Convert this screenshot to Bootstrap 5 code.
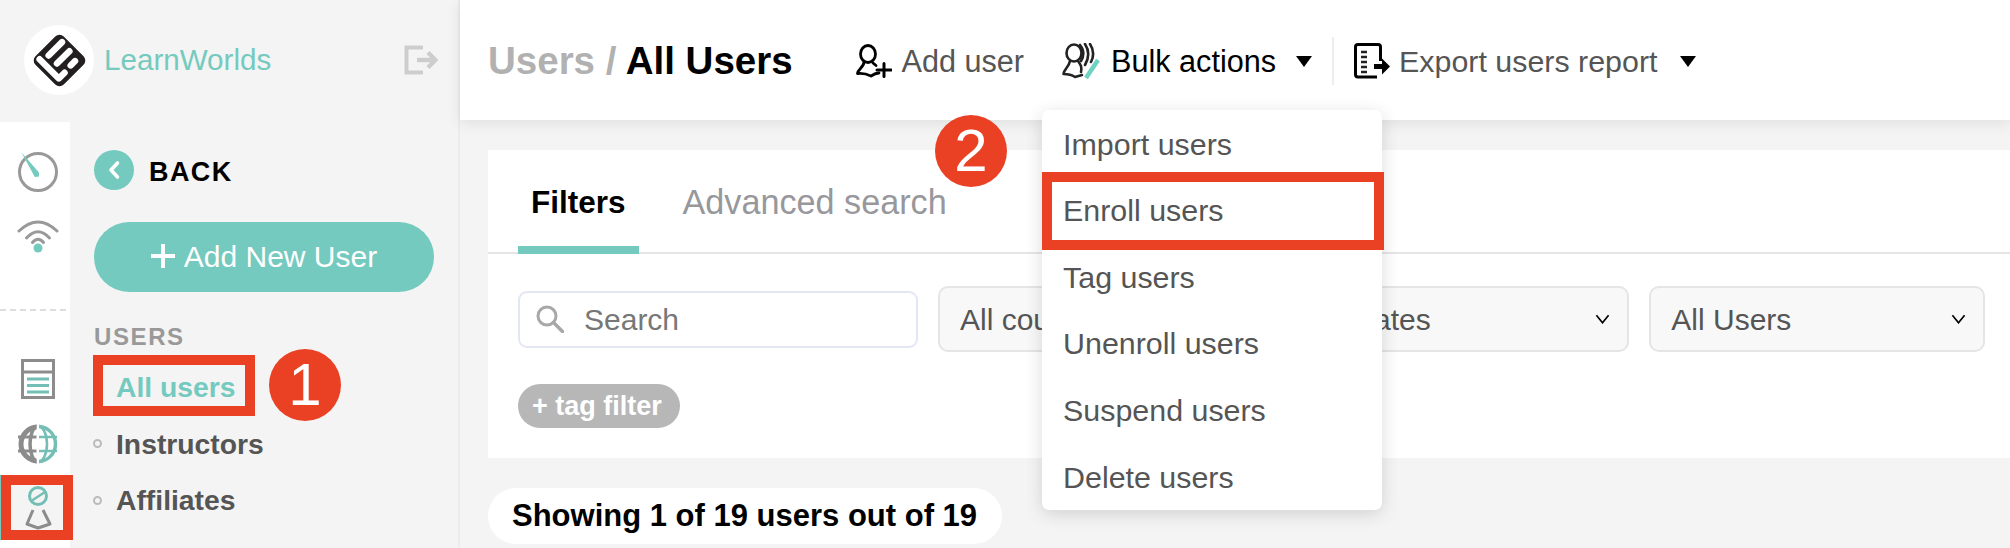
<!DOCTYPE html>
<html lang="en">
<head>
<meta charset="utf-8">
<title>Users / All Users</title>
<link href="https://cdn.jsdelivr.net/npm/bootstrap@5.3.0/dist/css/bootstrap.min.css" rel="stylesheet">
<style>
html,body{height:548px;overflow:hidden}
body{font-family:"Liberation Sans",Arial,sans-serif;background:#f4f4f4;color:#555}
.app-shell{width:2010px;height:548px;overflow:hidden}
.side{flex:0 0 460px;width:460px;min-width:0;border-right:2px solid #ececec;background:#f4f4f4}
.side-head{height:120px;padding-left:24px;flex:none}
.logo-disc{width:70px;height:70px;flex:none}
.logo-name{font-size:29.6px;color:#74cabf;margin-left:10px;line-height:1}
.logout-ico{margin-left:auto;margin-right:20px}
.side-body{margin-top:2px;flex:1;min-height:0}
.rail{flex:0 0 70px;width:70px;background:#fff}
.rail svg{display:block}
.rail-dash{width:66px;border-top:2px dashed #ddd;margin:56px 4px 48px 0}
.rail-active{width:70px;height:65px;margin-top:11px;background:#f4f4f4;box-shadow:inset 1px 0 0 #74cabf}
.panel{flex:1;min-width:0;padding:28px 24px 0;background:#f4f4f4}
.back-disc{width:40px;height:40px;background:#74cabf}
.back-word{font-size:27px;font-weight:700;color:#000;letter-spacing:1.4px;margin:5px 0 0 15px;line-height:1}
.add-pill{width:340px;height:70px;margin-top:32px;padding-bottom:8px;background:#74cabf;border:0;border-radius:35px;color:#fff;font-size:30px;gap:9px}
.add-pill:hover{background:#74cabf;color:#fff}
.group-word{font-size:24px;font-weight:700;color:#999;letter-spacing:1.6px;line-height:30px;margin-top:30px}
.side-menu{margin-top:7px;font-size:28.3px;font-weight:700}
.side-entry{height:56.5px;color:#555;gap:14px}
.side-entry.is-on{color:#74cabf}
.side-dot{width:9px;height:9px;border:2px solid #bbb;border-radius:50%;margin-left:-1px;flex:none}
.ann-box{border:10px solid #ea4125;pointer-events:none;z-index:30}
.box-users{left:-1px;top:-4px;width:162px;height:61px}
.box-rail{left:1px;top:0;width:72px;height:65px}
.box-enroll{left:0;top:-5px;width:342px;height:78px}
.ann-num{width:72px;height:72px;background:#ea4125;color:#fff;font-size:60px;font-weight:400;line-height:1;z-index:30}
.num-one{left:175px;top:-10px}
.num-two{left:475px;top:115px}
.main-col{flex:1;min-width:0;position:relative}
.top-bar{height:120px;background:#fff;box-shadow:0 3px 14px rgba(0,0,0,.09);position:relative;z-index:10;flex:none;padding:2px 0 0 28px}
.page-title{font-size:38.5px;font-weight:700;color:#000;margin:0;line-height:1;white-space:nowrap}
.page-title span{color:#b1b1b1}
.act{font-size:30.6px;color:#555;background:none;border:0;padding:0;display:flex;align-items:center;line-height:1;white-space:nowrap}
.act:hover,.act:focus,.act:active{color:#555}
.act-add{margin-left:63px;gap:10px}
.act-bulk{gap:11px;color:#000}
.act-bulk:hover{color:#000}
.bulk-wrap{margin-left:38px;height:48px;display:flex;align-items:center}
.tri{width:0;height:0;border-left:8px solid transparent;border-right:8px solid transparent;border-top:11px solid #000;margin-left:20px;flex:none}
.top-rule{width:2px;height:48px;background:#eee;margin-left:20px}
.act-exp{margin-left:20px;gap:9px;font-size:30.4px}
.tri-exp{margin-left:14px}
.drop-list.dropdown-menu{position:absolute;left:-20px;top:73px;width:340px;height:400px;padding:0;margin:0;border:0;border-radius:7px;box-shadow:0 4px 18px rgba(0,0,0,.14);font-size:30.4px;z-index:20}
.drop-list .dropdown-item{height:66.66px;display:flex;align-items:center;padding:2px 21px 0;color:#555;position:relative}
.content-area{padding:30px 0 0 28px}
.filter-card{border:0;border-radius:0;background:#fff;height:308px}
.filter-tabs{padding-left:30px;border-bottom:2px solid #e5e5e5;height:104px;flex-wrap:nowrap}
.filter-tabs .nav-link{border:0;border-radius:0;padding:30px 13px 0;height:104px;line-height:44px;margin:0;background:none}
.filter-tabs .nav-link.active{font-size:31.5px;font-weight:700;color:#000;border-bottom:8px solid #74cabf;background:none}
.filter-tabs .nav-item+.nav-item{margin-left:31px}
.filter-tabs .nav-link.later{font-size:34.2px;color:#97979c}
.filter-body{padding:32px 25px 0 30px}
.filter-row{gap:20px;height:66px}
.find-box{flex:0 0 400px;width:400px;min-width:0;height:57px;border:2px solid #e3e7f3;border-radius:9px;padding:0 0 0 16px;gap:20px;background:#fff}
.find-input{border:0;outline:0;flex:1;width:100px;min-width:0;font-size:30px;color:#666;background:none;padding:0}
.find-input::placeholder{color:#777;opacity:1}
.filter-select.form-select{--bs-form-select-bg-img:url("data:image/svg+xml,%3csvg xmlns='http://www.w3.org/2000/svg' viewBox='0 0 16 10'%3e%3cpath fill='none' stroke='%23000' stroke-width='1.8' d='M1.500 1l6.500 8 6.500-8'/%3e%3c/svg%3e");flex:1 1 0;min-width:0;height:66px;border:2px solid #e5e5e5;border-radius:10px;background-color:#f8f8f8;font-size:30px;color:#555;padding:0 40px 0 20px;background-size:15px 10px;background-position:right 17px center;box-shadow:none}
.tag-pill.badge{display:inline-flex;align-items:center;height:44px;width:162px;margin-top:32px;padding:0 14px;background:#b7b7b7;color:#fff;font-size:27px;font-weight:700;line-height:1}
.count-pill{display:inline-flex;align-items:center;height:56px;width:514px;margin-top:30px;padding-left:24px;background:#fff;border-radius:28px;font-size:31px;font-weight:700;color:#000;white-space:nowrap}
</style>
</head>
<body>
<div class="app-shell d-flex">
  <aside class="side d-flex flex-column">
    <div class="side-head d-flex align-items-center">
      <svg class="logo-disc" viewBox="0 0 70 70" aria-hidden="true">
        <circle cx="35" cy="35" r="35" fill="#fff"/>
        <g transform="translate(35.5 35.5) rotate(45)">
          <rect x="-20" y="-20" width="40" height="40" rx="6" fill="#231f20"/>
          <g fill="none" stroke="#fff" stroke-width="6.4" stroke-linecap="round" stroke-linejoin="round">
            <path d="M-15 13.2H12.2V5"/>
            <path d="M-11.2 4.2V-14.8"/>
            <path d="M.4 4V-13.6"/>
            <path d="M11.4 -4.4V-10.6"/>
          </g>
        </g>
      </svg>
      <span class="logo-name">LearnWorlds</span>
      <svg class="logout-ico" width="34" height="30" viewBox="0 0 34 30" fill="none" stroke="#cdcdcd" aria-hidden="true">
        <path d="M19 2.5H2.5V27.5H19" stroke-width="4"/>
        <path d="M13 15H31M24 7.5L31.5 15L24 22.5" stroke-width="4.4"/>
      </svg>
    </div>
    <div class="side-body d-flex">
      <nav class="rail d-flex flex-column align-items-center">
        <svg width="70" height="40" viewBox="0 0 70 40" style="margin-top:30px" aria-hidden="true">
          <circle cx="38" cy="20" r="18.5" fill="none" stroke="#999" stroke-width="3"/>
          <path d="M21.500 .5L39 20.500V24.500L34.800 25Z" fill="#74cabf"/>
        </svg>
        <svg width="70" height="34" viewBox="0 0 70 34" style="margin-top:27px" aria-hidden="true">
          <g fill="none" stroke="#999" stroke-width="3" stroke-linecap="round">
            <path d="M19 12Q38 -6 57 12"/>
            <path d="M26.500 19Q38 6.500 49.500 19"/>
            <path d="M32.500 23.500Q38 17 43.500 23.500"/>
          </g>
          <circle cx="38" cy="29" r="4.500" fill="#74cabf"/>
        </svg>
        <div class="rail-dash"></div>
        <svg width="70" height="40" viewBox="0 0 70 40" aria-hidden="true">
          <rect x="22.500" y="1.500" width="31" height="37" fill="none" stroke="#8c8c8c" stroke-width="3"/>
          <path d="M22 13H54" stroke="#8c8c8c" stroke-width="3"/>
          <path d="M27 20H49M27 26.500H49M27 33H49" stroke="#74bfb5" stroke-width="3"/>
        </svg>
        <svg width="70" height="40" viewBox="0 0 70 40" style="margin-top:25px" aria-hidden="true">
          <defs>
            <clipPath id="gl"><rect x="0" y="0" width="36.500" height="40"/></clipPath>
            <clipPath id="gr"><rect x="39" y="0" width="31" height="40"/></clipPath>
          </defs>
          <g clip-path="url(#gl)" fill="none" stroke="#8c8c8c">
            <circle cx="38" cy="20" r="17" stroke-width="5"/>
            <ellipse cx="38" cy="20" rx="8" ry="18" stroke-width="3.500"/>
            <path d="M18 13H38M18 27H38" stroke-width="3"/>
          </g>
          <g clip-path="url(#gr)" fill="none" stroke="#74bfb5">
            <circle cx="38" cy="20" r="17.500" stroke-width="3.500"/>
            <ellipse cx="38" cy="20" rx="9" ry="18" stroke-width="2.600"/>
            <path d="M38 13H57M38 27H57" stroke-width="2.400"/>
          </g>
        </svg>
        <div class="rail-active position-relative">
          <svg class="d-block" width="70" height="65" viewBox="0 0 70 65" aria-hidden="true">
            <circle cx="38" cy="21" r="8.500" fill="none" stroke="#74bfb5" stroke-width="3"/>
            <path d="M32 25.500L45 17" stroke="#74bfb5" stroke-width="2.500"/>
            <path d="M33 35L27 49L38 53L50 49L43 35" fill="none" stroke="#8c8c8c" stroke-width="3" stroke-linejoin="round"/>
          </svg>
          <span class="ann-box position-absolute box-rail"></span>
        </div>
      </nav>
      <div class="panel">
        <div class="d-flex align-items-center">
          <span class="back-disc rounded-circle d-flex align-items-center justify-content-center">
            <svg width="14" height="20" viewBox="0 0 14 20" fill="none" stroke="#fff" stroke-width="3.600" stroke-linecap="round" stroke-linejoin="round" aria-hidden="true"><path d="M10.500 3L4 10L10.500 17"/></svg>
          </span>
          <span class="back-word">BACK</span>
        </div>
        <button type="button" class="btn add-pill d-flex align-items-center justify-content-center">
          <svg width="24" height="24" viewBox="0 0 24 24" stroke="#fff" stroke-width="4" aria-hidden="true"><path d="M0 12H24M12 0V24"/></svg>
          <span>Add New User</span>
        </button>
        <div class="group-word">USERS</div>
        <div class="side-menu">
          <div class="side-entry is-on d-flex align-items-center position-relative">
            <span class="side-dot"></span><span>All users</span>
            <span class="ann-box position-absolute box-users"></span>
            <span class="ann-num position-absolute num-one rounded-circle d-flex align-items-center justify-content-center">1</span>
          </div>
          <div class="side-entry d-flex align-items-center"><span class="side-dot"></span><span>Instructors</span></div>
          <div class="side-entry d-flex align-items-center"><span class="side-dot"></span><span>Affiliates</span></div>
        </div>
      </div>
    </div>
  </aside>
  <main class="main-col d-flex flex-column">
    <header class="top-bar d-flex align-items-center">
      <h1 class="page-title"><span>Users /</span> All Users</h1>
      <button type="button" class="btn act act-add">
        <svg width="36" height="34" viewBox="0 0 36 34" fill="none" stroke="#000" stroke-width="2.800" stroke-linecap="round" stroke-linejoin="round" aria-hidden="true">
          <ellipse cx="12" cy="10" rx="7.500" ry="8.500"/>
          <path d="M8 18C8 23 2 25 1.500 29.500C7 29 11 30 15 32C18 30 21 29 23 29"/>
          <path d="M17 19L20 21.500"/>
          <path d="M21 26H35M28 19.500V32.500" stroke-width="3"/>
        </svg>
        <span>Add user</span>
      </button>
      <div class="bulk-wrap dropdown">
        <button type="button" class="btn act act-bulk">
          <svg width="38" height="36" viewBox="0 0 38 36" fill="none" stroke="#222" stroke-width="2.600" stroke-linecap="round" stroke-linejoin="round" aria-hidden="true">
            <ellipse cx="12" cy="10" rx="7.500" ry="8.500"/>
            <path d="M8 18C7 24 2 26 1.500 31C6 31 10 32 13 34L20 32"/>
            <path d="M16 18C19 22 20 24 19 29"/>
            <path d="M18 2C22 7 22 13 19 18M23 1C27 7 27 15 23 22M28 1C32 7 32 13 29 19"/>
            <path d="M36 17L24 35" stroke="#6fd3c4" stroke-width="4.500" stroke-linecap="butt"/>
          </svg>
          <span>Bulk actions</span>
        </button>
        <span class="tri"></span>
        <div class="dropdown-menu show drop-list">
          <a class="dropdown-item" href="#">Import users</a>
          <a class="dropdown-item" href="#">Enroll users<span class="ann-box position-absolute box-enroll"></span></a>
          <a class="dropdown-item" href="#">Tag users</a>
          <a class="dropdown-item" href="#">Unenroll users</a>
          <a class="dropdown-item" href="#">Suspend users</a>
          <a class="dropdown-item" href="#">Delete users</a>
        </div>
      </div>
      <span class="top-rule"></span>
      <button type="button" class="btn act act-exp">
        <svg width="36" height="36" viewBox="0 0 36 36" fill="none" aria-hidden="true">
          <path d="M23 34H4C2.500 34 1.500 33 1.500 31.500V4C1.500 2.500 2.500 1.500 4 1.500H24C25.500 1.500 26.500 2.500 26.500 4V18" stroke="#000" stroke-width="3"/>
          <path d="M7 9H13M7 14H13M7 19H13M7 24H13M7 29H13" stroke="#222" stroke-width="2.600"/>
          <path d="M20 21H28V15.500L36 23.500L28 31.500V26H20Z" fill="#000"/>
        </svg>
        <span>Export users report</span>
        <span class="tri tri-exp"></span>
      </button>
      <span class="ann-num position-absolute num-two rounded-circle d-flex align-items-center justify-content-center">2</span>
    </header>
    <section class="content-area">
      <div class="card filter-card">
        <ul class="nav nav-tabs filter-tabs">
          <li class="nav-item"><a class="nav-link active" href="#">Filters</a></li>
          <li class="nav-item"><a class="nav-link later" href="#">Advanced search</a></li>
        </ul>
        <div class="filter-body">
          <div class="filter-row d-flex align-items-center">
            <div class="find-box d-flex align-items-center">
              <svg width="28" height="28" viewBox="0 0 28 28" fill="none" stroke="#a8a8a8" aria-hidden="true">
                <circle cx="11" cy="11" r="9" stroke-width="3"/>
                <path d="M17.500 17.500L26.500 26.500" stroke-width="3.500" stroke-linecap="round"/>
              </svg>
              <input class="find-input" type="text" placeholder="Search">
            </div>
            <select class="form-select filter-select"><option>All courses</option></select>
            <select class="form-select filter-select"><option>All dates</option></select>
            <select class="form-select filter-select"><option>All Users</option></select>
          </div>
          <span class="badge rounded-pill tag-pill">+ tag filter</span>
        </div>
      </div>
      <div class="count-pill">Showing 1 of 19 users out of 19</div>
    </section>
  </main>
</div>
<script src="https://cdn.jsdelivr.net/npm/bootstrap@5.3.0/dist/js/bootstrap.bundle.min.js"></script>
</body>
</html>
